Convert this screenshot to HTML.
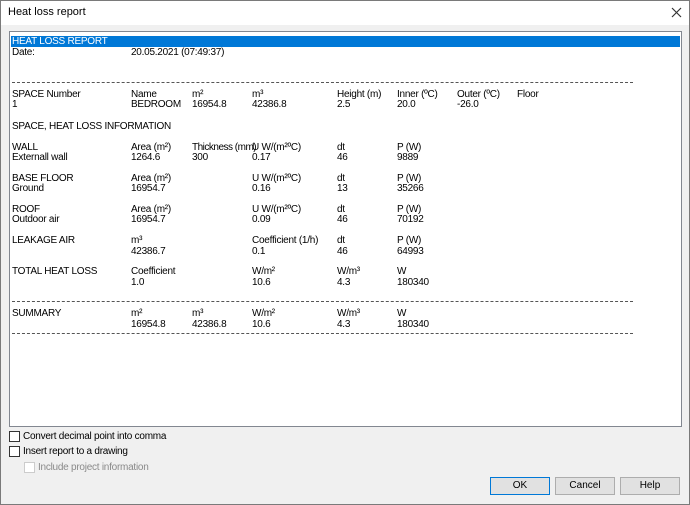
<!DOCTYPE html>
<html><head><style>
*{margin:0;padding:0;box-sizing:border-box}
body{width:690px;height:505px;background:#f0f0f0;font-family:"Liberation Sans",Tahoma,sans-serif;font-size:10px;color:#000;position:relative;overflow:hidden}
.win{position:absolute;left:0;top:0;width:690px;height:505px;border:1px solid #7a7a7a}
.title{position:absolute;left:1px;top:1px;width:688px;height:24px;background:#fff}
.t{position:absolute;white-space:nowrap;line-height:11px;letter-spacing:-0.25px;margin-top:1px}
.list{position:absolute;left:9px;top:31px;width:673px;height:396px;background:#fff;border:1px solid #828790}
.hl{position:absolute;left:11px;top:36px;width:669px;height:11px;background:#0078d7}
.dash{position:absolute;left:12px;width:621px;border-top:1px dashed #555}
.cb{position:absolute;width:11px;height:11px;border:1px solid #333;background:#fff}
.btn{position:absolute;top:477px;width:60px;height:18px;background:#e1e1e1;border:1px solid #adadad;text-align:center;line-height:16px;font-size:10px}
</style></head><body>
<div class="win"></div>
<div class="title"></div>
<div class="t" style="left:8px;top:6px;font-size:11px;letter-spacing:0">Heat loss report</div>
<svg style="position:absolute;left:671px;top:7px" width="11" height="11"><path d="M1 1L10 10M10 1L1 10" stroke="#333" stroke-width="1.2"/></svg>
<div class="list"></div>
<div class="hl"></div>
<div class="t" style="left:12px;top:35px;color:#fff">HEAT LOSS REPORT</div>
<div class="t" style="left:12px;top:46px">Date:</div><div class="t" style="left:131px;top:46px">20.05.2021 (07:49:37)</div>
<div class="dash" style="top:82px"></div>
<div class="t" style="left:12px;top:88px">SPACE Number</div><div class="t" style="left:131px;top:88px">Name</div><div class="t" style="left:192px;top:88px">m²</div><div class="t" style="left:252px;top:88px">m³</div><div class="t" style="left:337px;top:88px">Height (m)</div><div class="t" style="left:397px;top:88px">Inner (ºC)</div><div class="t" style="left:457px;top:88px">Outer (ºC)</div><div class="t" style="left:517px;top:88px">Floor</div>
<div class="t" style="left:12px;top:98px">1</div><div class="t" style="left:131px;top:98px">BEDROOM</div><div class="t" style="left:192px;top:98px">16954.8</div><div class="t" style="left:252px;top:98px">42386.8</div><div class="t" style="left:337px;top:98px">2.5</div><div class="t" style="left:397px;top:98px">20.0</div><div class="t" style="left:457px;top:98px">-26.0</div>
<div class="t" style="left:12px;top:120px">SPACE, HEAT LOSS INFORMATION</div>
<div class="t" style="left:12px;top:141px">WALL</div><div class="t" style="left:131px;top:141px">Area (m²)</div><div class="t" style="left:192px;top:141px;letter-spacing:-0.5px">Thickness (mm)</div><div class="t" style="left:252px;top:141px">U W/(m²ºC)</div><div class="t" style="left:337px;top:141px">dt</div><div class="t" style="left:397px;top:141px">P (W)</div>
<div class="t" style="left:12px;top:151px">Externall wall</div><div class="t" style="left:131px;top:151px">1264.6</div><div class="t" style="left:192px;top:151px">300</div><div class="t" style="left:252px;top:151px">0.17</div><div class="t" style="left:337px;top:151px">46</div><div class="t" style="left:397px;top:151px">9889</div>
<div class="t" style="left:12px;top:172px">BASE FLOOR</div><div class="t" style="left:131px;top:172px">Area (m²)</div><div class="t" style="left:252px;top:172px">U W/(m²ºC)</div><div class="t" style="left:337px;top:172px">dt</div><div class="t" style="left:397px;top:172px">P (W)</div>
<div class="t" style="left:12px;top:182px">Ground</div><div class="t" style="left:131px;top:182px">16954.7</div><div class="t" style="left:252px;top:182px">0.16</div><div class="t" style="left:337px;top:182px">13</div><div class="t" style="left:397px;top:182px">35266</div>
<div class="t" style="left:12px;top:203px">ROOF</div><div class="t" style="left:131px;top:203px">Area (m²)</div><div class="t" style="left:252px;top:203px">U W/(m²ºC)</div><div class="t" style="left:337px;top:203px">dt</div><div class="t" style="left:397px;top:203px">P (W)</div>
<div class="t" style="left:12px;top:213px">Outdoor air</div><div class="t" style="left:131px;top:213px">16954.7</div><div class="t" style="left:252px;top:213px">0.09</div><div class="t" style="left:337px;top:213px">46</div><div class="t" style="left:397px;top:213px">70192</div>
<div class="t" style="left:12px;top:234px">LEAKAGE AIR</div><div class="t" style="left:131px;top:234px">m³</div><div class="t" style="left:252px;top:234px">Coefficient (1/h)</div><div class="t" style="left:337px;top:234px">dt</div><div class="t" style="left:397px;top:234px">P (W)</div>
<div class="t" style="left:131px;top:245px">42386.7</div><div class="t" style="left:252px;top:245px">0.1</div><div class="t" style="left:337px;top:245px">46</div><div class="t" style="left:397px;top:245px">64993</div>
<div class="t" style="left:12px;top:265px">TOTAL HEAT LOSS</div><div class="t" style="left:131px;top:265px">Coefficient</div><div class="t" style="left:252px;top:265px">W/m²</div><div class="t" style="left:337px;top:265px">W/m³</div><div class="t" style="left:397px;top:265px">W</div>
<div class="t" style="left:131px;top:276px">1.0</div><div class="t" style="left:252px;top:276px">10.6</div><div class="t" style="left:337px;top:276px">4.3</div><div class="t" style="left:397px;top:276px">180340</div>
<div class="dash" style="top:301px"></div>
<div class="t" style="left:12px;top:307px">SUMMARY</div><div class="t" style="left:131px;top:307px">m²</div><div class="t" style="left:192px;top:307px">m³</div><div class="t" style="left:252px;top:307px">W/m²</div><div class="t" style="left:337px;top:307px">W/m³</div><div class="t" style="left:397px;top:307px">W</div>
<div class="t" style="left:131px;top:318px">16954.8</div><div class="t" style="left:192px;top:318px">42386.8</div><div class="t" style="left:252px;top:318px">10.6</div><div class="t" style="left:337px;top:318px">4.3</div><div class="t" style="left:397px;top:318px">180340</div>
<div class="dash" style="top:333px"></div>
<div class="cb" style="left:9px;top:431px"></div><div class="t" style="left:23px;top:430px">Convert decimal point into comma</div>
<div class="cb" style="left:9px;top:446px"></div><div class="t" style="left:23px;top:445px">Insert report to a drawing</div>
<div class="cb" style="left:24px;top:462px;border-color:#ccc"></div><div class="t" style="left:38px;top:461px;color:#8a8a8a">Include project information</div>
<div class="btn" style="left:490px;border:1px solid #0078d7">OK</div>
<div class="btn" style="left:555px">Cancel</div>
<div class="btn" style="left:620px">Help</div>
</body></html>
